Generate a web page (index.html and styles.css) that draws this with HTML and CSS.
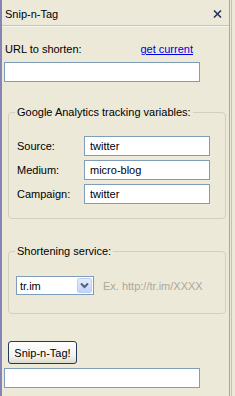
FILE: index.html
```html
<!DOCTYPE html>
<html>
<head>
<meta charset="utf-8">
<link rel="stylesheet" href="styles.css">
</head>
<body>
<div class="window">
  <div class="edge"></div>
  <div class="panel">
    <div class="titlebar">
      <span class="title">Snip-n-Tag</span>
      <svg class="close" width="9" height="8" viewBox="0 0 9 8"><path d="M1 0.5 L8 7.5 M8 0.5 L1 7.5" stroke="#27355e" stroke-width="1.6" fill="none"/></svg>
    </div>
    <div class="content">
      <div class="url-row">
        <span class="label">URL to shorten:</span>
        <a class="link" href="#">get current</a>
      </div>
      <input class="textbox wide" type="text" value="">
      <fieldset class="group ga">
        <legend>Google Analytics tracking variables:</legend>
        <div class="field"><label class="flabel">Source:</label><input class="textbox short" type="text" value="twitter"></div>
        <div class="field"><label class="flabel">Medium:</label><input class="textbox short" type="text" value="micro-blog"></div>
        <div class="field"><label class="flabel">Campaign:</label><input class="textbox short" type="text" value="twitter"></div>
      </fieldset>
      <fieldset class="group svc">
        <legend>Shortening service:</legend>
        <div class="svc-row">
          <div class="select">
            <span class="select-text">tr.im</span>
            <span class="select-btn"><svg width="9" height="7" viewBox="0 0 9 7"><path d="M1 1.5 L4.5 5 L8 1.5" stroke="#4d6185" stroke-width="2" fill="none"/></svg></span>
          </div>
          <span class="hint">Ex. http://tr.im/XXXX</span>
        </div>
      </fieldset>
      <button class="btn" type="button">Snip-n-Tag!</button>
      <input class="textbox wide result" type="text" value="">
    </div>
  </div>
  <div class="splitter"><div class="line1"></div><div class="gap"></div><div class="line2"></div></div>
</div>
</body>
</html>
```
FILE: styles.css
```css
html, body {
  margin: 0;
  padding: 0;
  background: #ece9d8;
}
body {
  font-family: "Liberation Sans", Arial, sans-serif;
  font-size: 11px;
  color: #000;
}
.window {
  display: flex;
  width: 235px;
  height: 396px;
  overflow: hidden;
}
.edge {
  width: 2px;
  background: #8584b4;
  flex: none;
}
.panel {
  width: 227px;
  flex: none;
  display: flex;
  flex-direction: column;
}
.titlebar {
  height: 25px;
  border-bottom: 1px solid #c9c6b5;
  display: flex;
  align-items: center;
  justify-content: space-between;
  padding: 0 7px 0 3px;
  box-shadow: 0 1px 0 #f6f5ee;
}
.title {
  line-height: 14px;
  margin-top: 3px;
}
.close {
  margin-top: 2px;
  display: block;
}
.content {
  display: flex;
  flex-direction: column;
  align-items: flex-start;
  padding: 17px 0 0 2px;
}
.url-row {
  display: flex;
  justify-content: space-between;
  width: 188px;
  padding-left: 1px;
  line-height: 13px;
}
.link {
  color: #0000e6;
  text-decoration: underline;
}
.textbox {
  box-sizing: border-box;
  height: 20px;
  border: 1px solid #7f9db9;
  background: #fff;
  font-family: inherit;
  font-size: 11px;
  padding: 0 0 0 5px;
  margin: 0;
  color: #000;
  outline: none;
}
.wide {
  width: 196px;
  margin-top: 6px;
}
.group {
  box-sizing: border-box;
  width: 218px;
  margin: 24px 0 0 4px;
  border: 1px solid #d0d0bf;
  border-radius: 4px;
  padding: 0 0 0 6px;
}
.group legend {
  padding: 0 2px;
  line-height: 13px;
}
.ga {
  padding-top: 17px;
  padding-bottom: 14px;
}
.field {
  display: flex;
  align-items: center;
  margin-top: 4px;
}
.field:first-of-type {
  margin-top: 0;
}
.flabel {
  width: 67px;
  padding-left: 2px;
}
.short {
  width: 126px;
}
.svc {
  margin-top: 26px;
  padding-top: 18px;
  padding-bottom: 18px;
}
.svc-row {
  display: flex;
  align-items: center;
}
.select {
  box-sizing: border-box;
  width: 78px;
  height: 19px;
  margin-left: 1px;
  border: 1px solid #7f9db9;
  background: #fff;
  display: flex;
  align-items: center;
  justify-content: space-between;
  padding: 1px;
}
.select-text {
  padding-left: 2px;
}
.select-btn {
  width: 15px;
  height: 15px;
  box-sizing: border-box;
  border: 1px solid #bcd0f6;
  border-radius: 2px;
  background: linear-gradient(#e4ecfd, #c2d3fb);
  display: flex;
  align-items: center;
  justify-content: center;
}
.select-btn svg {
  display: block;
}
.hint {
  margin-left: 9px;
  color: #aca899;
}
.btn {
  box-sizing: border-box;
  margin: 27px 0 0 4px;
  width: 69px;
  height: 23px;
  border: 1px solid #1f3a5a;
  border-radius: 3px;
  background: linear-gradient(#ffffff, #f2f1ea 70%, #dcd9cc);
  font-family: inherit;
  font-size: 11px;
  color: #000;
  padding: 0;
}
.result {
  margin-top: 4px;
}
.splitter {
  display: flex;
  flex: none;
}
.line1 {
  width: 1px;
  background: #aca899;
}
.gap {
  width: 1px;
  background: #ece9d8;
}
.line2 {
  width: 1px;
  background: #c5c2b2;
}
```
